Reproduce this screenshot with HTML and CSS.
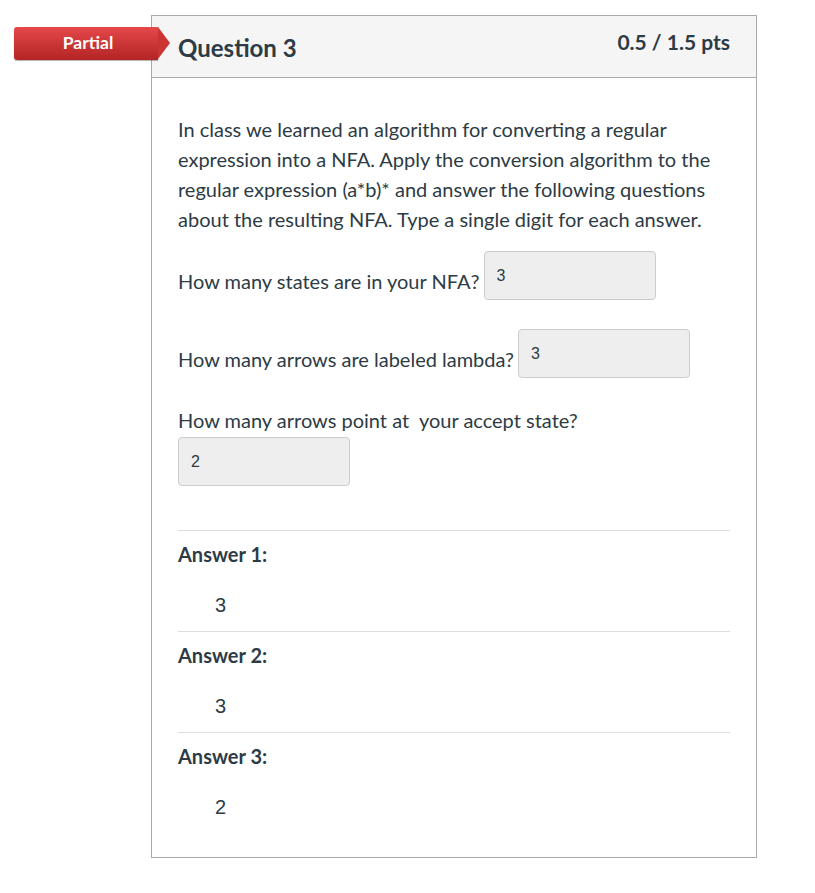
FILE: index.html
```html
<html>
  <head>
    <title>Question 3</title>
    <meta name="viewport" content="width=device-width, initial-scale=1">
    <link rel="stylesheet" href="styles.css">
  </head>
  <body>
    <div class="quiz">
      <div class="question">
        <div class="flag">Partial</div>
        <div class="header">
          <h2 class="name">Question 3</h2>
          <div class="points">0.5 / 1.5 pts</div>
        </div>
        <div class="content">
          <p class="text">In class we learned an algorithm for converting a regular expression into a NFA. Apply the conversion algorithm to the regular expression (a*b)* and answer the following questions about the resulting NFA. Type a single digit for each answer.</p>
          <p class="blank">How many states are in your NFA? <input type="text" value="3" readonly></p>
          <p class="blank second">How many arrows are labeled lambda? <input type="text" value="3" readonly></p>
          <p class="blank last">How many arrows point at &nbsp;your accept state?<br><input type="text" value="2" readonly></p>

          <div class="answer">
            <div class="label">Answer 1:</div>
            <div class="value">3</div>
          </div>
          <div class="answer">
            <div class="label">Answer 2:</div>
            <div class="value">3</div>
          </div>
          <div class="answer">
            <div class="label">Answer 3:</div>
            <div class="value">2</div>
          </div>
        </div>
      </div>
    </div>
  </body>
</html>
```

FILE: styles.css
```css
body {
  margin: 0;
  font-family: Lato, "Liberation Sans", sans-serif;
  color: #2d3b45;
  background: #fff;
}
.quiz {
  padding: 15px 0 0 151px;
}
.question {
  position: relative;
  width: 604px;
  border: 1px solid #aaa;
}

/* red ribbon hanging off the left edge */
.flag {
  position: absolute;
  left: -138px;
  top: 11px;
  width: 144px;
  height: 33px;
  box-sizing: border-box;
  padding-left: 4px;
  line-height: 32px;
  text-align: center;
  color: #fff;
  font-weight: bold;
  font-size: 17.5px;
  border-radius: 3px 0 0 3px;
  background: linear-gradient(#e5484a, #b32424);
  box-shadow: 0 1px 1px rgba(0, 0, 0, 0.3);
}
.flag:after {
  content: "";
  position: absolute;
  right: -12px;
  top: 0;
  border-top: 16.5px solid transparent;
  border-bottom: 16.5px solid transparent;
  border-left: 12px solid #cc3434;
}

.header {
  display: flex;
  justify-content: space-between;
  align-items: flex-start;
  height: 62px;
  box-sizing: border-box;
  padding: 0 26px;
  background: #f5f5f5;
  border-bottom: 1px solid #aaa;
}
.name {
  margin: 18px 0 0;
  font-size: 24px;
  line-height: 28px;
  font-weight: bold;
}
.points {
  margin-top: 13px;
  font-size: 21px;
  line-height: 26px;
  font-weight: bold;
}

.content {
  padding: 36px 26px 24px;
  font-size: 20px;
  line-height: 30px;
}
.text {
  margin: 0 0 17px;
}
.blank {
  margin: 0 0 29px;
}
.blank.second {
  margin-bottom: 27px;
}
.blank input {
  width: 172px;
  height: 49px;
  box-sizing: border-box;
  margin: 0 0 0 -1px;
  padding: 0 12px;
  vertical-align: 8px;
  font-family: "Liberation Sans", Arial, sans-serif;
  font-size: 16px;
  color: #2d3b45;
  background: #eee;
  border: 1px solid #ccc;
  border-radius: 4px;
}
.blank.last {
  margin-bottom: 44px;
}
.blank.last input {
  margin: 2px 0 0;
}

.answer {
  border-top: 1px solid #ddd;
  padding: 8px 0 11px;
}
.answer .label {
  font-weight: bold;
}
.answer .value {
  margin: 21px 0 0 37px;
  font-family: "Liberation Sans", Arial, sans-serif;
}
```
